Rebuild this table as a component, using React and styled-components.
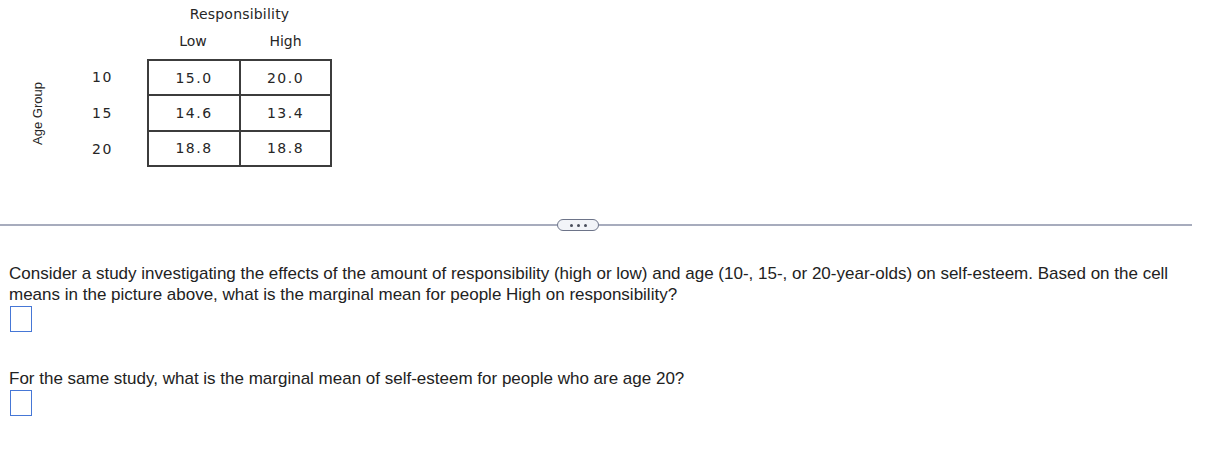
import React from "react";
import styled, { createGlobalStyle } from "styled-components";

const GlobalStyle = createGlobalStyle`
  html, body { margin: 0; padding: 0; background: #ffffff; }
  body { font-family: "Liberation Sans", Arial, sans-serif; color: #222; }
`;

const Page = styled.div`
  width: 1205px;
  display: flex;
  flex-direction: column;
`;

const Figure = styled.div`
  display: grid;
  grid-template-columns: 74px 73px 185px;
  grid-template-rows: 28px 31px 108px;
  font-family: "DejaVu Sans", Verdana, sans-serif;
  font-size: 14px;
  color: #262626;
`;

const Title = styled.div`
  grid-column: 3;
  grid-row: 1;
  display: flex;
  align-items: center;
  justify-content: center;
  letter-spacing: 0.2px;
`;

const ColHeads = styled.div`
  grid-column: 3;
  grid-row: 2;
  display: grid;
  grid-template-columns: 92px 93px;
  align-items: center;
  padding-bottom: 6px;
`;

const ColHead = styled.div`
  text-align: center;
`;

const AxisCell = styled.div`
  grid-column: 1;
  grid-row: 3;
  display: flex;
  align-items: center;
  justify-content: center;
`;

const AxisLabel = styled.div`
  font-family: "Liberation Sans", Arial, sans-serif;
  font-size: 13px;
  color: #262626;
  white-space: nowrap;
  transform: rotate(-90deg);
`;

const RowLabels = styled.div`
  grid-column: 2;
  grid-row: 3;
  display: grid;
  grid-template-rows: repeat(3, 36px);
  padding-left: 18px;
`;

const RowLabel = styled.div`
  display: flex;
  align-items: center;
  letter-spacing: 1.5px;
`;

const DataGrid = styled.div`
  grid-column: 3;
  grid-row: 3;
  box-sizing: border-box;
  width: 185px;
  height: 108px;
  padding: 2px;
  gap: 2px;
  background: #3c3c3c;
  display: grid;
  grid-template-columns: 90px 1fr;
  grid-template-rows: repeat(3, 1fr);
`;

const Cell = styled.div`
  background: #fff;
  display: flex;
  align-items: center;
  justify-content: center;
  letter-spacing: 1.5px;
`;

const Separator = styled.div`
  margin-top: 52px;
  width: 1192px;
  height: 12px;
  display: flex;
  align-items: center;
`;

const Rule = styled.div`
  height: 2px;
  background: #a7acbd;
  flex: ${(p) => (p.$grow ? 1 : "none")};
  width: ${(p) => (p.$width ? `${p.$width}px` : "auto")};
`;

const MoreButton = styled.div`
  width: 42px;
  height: 12px;
  box-sizing: border-box;
  border: 1px solid #6d7489;
  border-radius: 6px;
  background: #f2f4f8;
  display: flex;
  align-items: center;
  justify-content: center;
  gap: 4px;
`;

const Dot = styled.span`
  width: 3px;
  height: 3px;
  border-radius: 50%;
  background: #4a4f5c;
`;

const Questions = styled.div`
  margin-top: 32px;
  padding-left: 9px;
  width: 1183px;
  display: flex;
  flex-direction: column;
  gap: 36px;
`;

const Question = styled.div`
  display: flex;
  flex-direction: column;
  align-items: flex-start;
`;

const Prompt = styled.div`
  font-size: 17px;
  line-height: 21px;
  color: #222;
`;

const AnswerBox = styled.div`
  margin-top: 1px;
  margin-left: 1px;
  width: 22px;
  height: 26px;
  box-sizing: border-box;
  border: 1.5px solid #4677d6;
  background: #fff;
`;

const rows = [
  { age: "10", low: "15.0", high: "20.0" },
  { age: "15", low: "14.6", high: "13.4" },
  { age: "20", low: "18.8", high: "18.8" },
];

export default function App() {
  return (
    <>
      <GlobalStyle />
      <Page>
        <Figure>
          <Title>Responsibility</Title>
          <ColHeads>
            <ColHead>Low</ColHead>
            <ColHead>High</ColHead>
          </ColHeads>
          <AxisCell>
            <AxisLabel>Age Group</AxisLabel>
          </AxisCell>
          <RowLabels>
            {rows.map((r) => (
              <RowLabel key={r.age}>{r.age}</RowLabel>
            ))}
          </RowLabels>
          <DataGrid>
            {rows.map((r) => (
              <React.Fragment key={r.age}>
                <Cell>{r.low}</Cell>
                <Cell>{r.high}</Cell>
              </React.Fragment>
            ))}
          </DataGrid>
        </Figure>
        <Separator>
          <Rule $width={557} />
          <MoreButton>
            <Dot />
            <Dot />
            <Dot />
          </MoreButton>
          <Rule $grow />
        </Separator>
        <Questions>
          <Question>
            <Prompt>
              Consider a study investigating the effects of the amount of responsibility (high or low) and age (10-, 15-, or 20-year-olds) on self-esteem. Based on the cell means in the picture above, what is the marginal mean for people High on responsibility?
            </Prompt>
            <AnswerBox />
          </Question>
          <Question>
            <Prompt>For the same study, what is the marginal mean of self-esteem for people who are age 20?</Prompt>
            <AnswerBox />
          </Question>
        </Questions>
      </Page>
    </>
  );
}
